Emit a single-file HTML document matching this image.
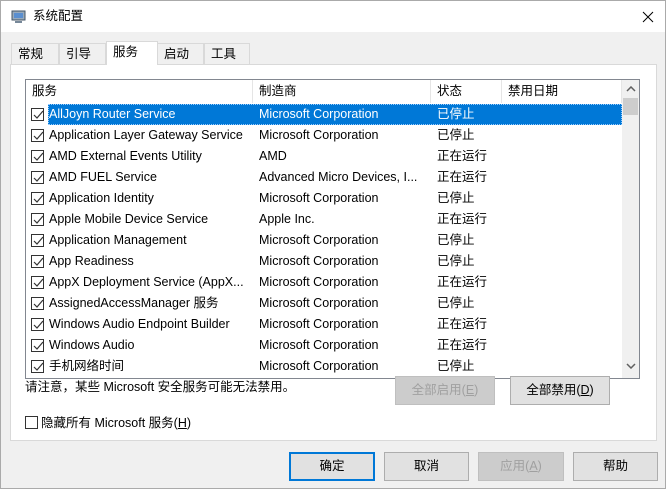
<!DOCTYPE html>
<html><head><meta charset="utf-8"><style>
*{margin:0;padding:0;box-sizing:border-box}
body{width:668px;height:493px;overflow:hidden;background:#fff;font-family:"Liberation Sans","Noto Sans CJK SC",sans-serif;font-size:12.5px;line-height:16px;color:#000;position:relative}
.a{position:absolute;white-space:nowrap}
.win{position:absolute;left:0;top:0;width:666px;height:489px;background:#f0f0f0;border:1px solid #aaa}
.title{position:absolute;left:0;top:0;width:664px;height:31px;background:#fff}
.tab{position:absolute;top:42px;height:21px;border:1px solid #d9d9d9;border-bottom:none;background:#f0f0f0;padding:2px 0 0 6px}
.panel{position:absolute;left:9px;top:63px;width:647px;height:377px;background:#fff;border:1px solid #d9d9d9}
.list{position:absolute;left:24px;top:78px;width:615px;height:300px;border:1px solid #828790;background:#fff;overflow:hidden}
.hdr{position:absolute;top:0;height:23px;border-right:1px solid #e5e5e5;padding:3px 0 0 6px}
.row{position:absolute;left:0;width:596px;height:21px}
.cb{position:absolute;left:5px;top:4px;width:13px;height:13px;border:1px solid #333;background:#fff}
.cb svg{position:absolute;left:1px;top:1px}
.row span{position:absolute;top:2px}
.btn{position:absolute;height:29px;border:1px solid #adadad;background:#e1e1e1;text-align:center;line-height:27px}
.dis{color:#a0a0a0;background:#cccccc;border-color:#bfbfbf}
</style></head><body>
<div class="win">
<div class="title"></div>
<svg class="a" style="left:10px;top:8px" width="16" height="16"><rect x="1" y="2" width="13" height="9" fill="#9ab" stroke="#456"/><rect x="3" y="4" width="9" height="5" fill="#5a8fd0"/><rect x="4" y="12" width="7" height="2" fill="#789"/></svg>
<div class="a" style="left:32px;top:7px">系统配置</div>
<svg class="a" style="left:641px;top:10px" width="12" height="12"><path d="M1 1L11 11M11 1L1 11" stroke="#000" stroke-width="1"/></svg>
<div class="panel"></div>
<div class="tab" style="left:10px;width:48px">常规</div>
<div class="tab" style="left:58px;width:47px">引导</div>
<div class="tab" style="left:105px;top:40px;height:24px;width:52px;background:#fff;z-index:2">服务</div>
<div class="tab" style="left:156px;width:47px">启动</div>
<div class="tab" style="left:203px;width:46px">工具</div>
<div class="list">
<div class="hdr" style="left:0;width:227px">服务</div>
<div class="hdr" style="left:227px;width:178px">制造商</div>
<div class="hdr" style="left:405px;width:71px">状态</div>
<div class="hdr" style="left:476px;width:120px">禁用日期</div>
<div id="rows"></div>
<div class="a" style="left:596px;top:0;width:17px;height:298px;background:#f0f0f0"></div>
<div class="a" style="left:597px;top:18px;width:15px;height:17px;background:#cdcdcd"></div>
<svg class="a" style="left:600px;top:6px" width="10" height="6"><path d="M1 5L5 1L9 5" stroke="#606060" fill="none" stroke-width="1.5"/></svg>
<svg class="a" style="left:600px;top:283px" width="10" height="6"><path d="M1 1L5 5L9 1" stroke="#606060" fill="none" stroke-width="1.5"/></svg>
</div>
<div class="a" style="left:24px;top:378px">请注意，某些 Microsoft 安全服务可能无法禁用。</div>
<div class="btn dis" style="left:394px;top:375px;width:100px">全部启用(<u>E</u>)</div>
<div class="btn" style="left:509px;top:375px;width:100px">全部禁用(<u>D</u>)</div>
<div class="a" style="left:24px;top:415px;width:13px;height:13px;border:1px solid #333;background:#fff"></div>
<div class="a" style="left:40px;top:414px">隐藏所有 Microsoft 服务(<u>H</u>)</div>
<div class="btn" style="left:288px;top:451px;width:86px;border:2px solid #0078d7;line-height:25px">确定</div>
<div class="btn" style="left:383px;top:451px;width:85px">取消</div>
<div class="btn dis" style="left:477px;top:451px;width:86px">应用(<u>A</u>)</div>
<div class="btn" style="left:572px;top:451px;width:85px">帮助</div>
</div>
<script>
var d=[["AllJoyn Router Service","Microsoft Corporation","已停止"],
["Application Layer Gateway Service","Microsoft Corporation","已停止"],
["AMD External Events Utility","AMD","正在运行"],
["AMD FUEL Service","Advanced Micro Devices, I...","正在运行"],
["Application Identity","Microsoft Corporation","已停止"],
["Apple Mobile Device Service","Apple Inc.","正在运行"],
["Application Management","Microsoft Corporation","已停止"],
["App Readiness","Microsoft Corporation","已停止"],
["AppX Deployment Service (AppX...","Microsoft Corporation","正在运行"],
["AssignedAccessManager 服务","Microsoft Corporation","已停止"],
["Windows Audio Endpoint Builder","Microsoft Corporation","正在运行"],
["Windows Audio","Microsoft Corporation","正在运行"],
["手机网络时间","Microsoft Corporation","已停止"]];
var h="";
d.forEach(function(r,i){
var sel=i==0;
h+='<div class="row" style="top:'+(24+i*21)+'px">'+
(sel?'<div class="a" style="left:22px;top:0;width:574px;height:21px;background:#0078d7;border:1px dotted #9cf"></div>':'')+
'<div class="cb"><svg width="11" height="11"><path d="M1 5L4 8L10 1" stroke="#333" fill="none" stroke-width="1.2"/></svg></div>'+
'<span style="left:23px;'+(sel?'color:#fff':'')+'">'+r[0]+'</span>'+
'<span style="left:233px;'+(sel?'color:#fff':'')+'">'+r[1]+'</span>'+
'<span style="left:411px;'+(sel?'color:#fff':'')+'">'+r[2]+'</span></div>';
});
document.getElementById("rows").innerHTML=h;
</script>
</body></html>
